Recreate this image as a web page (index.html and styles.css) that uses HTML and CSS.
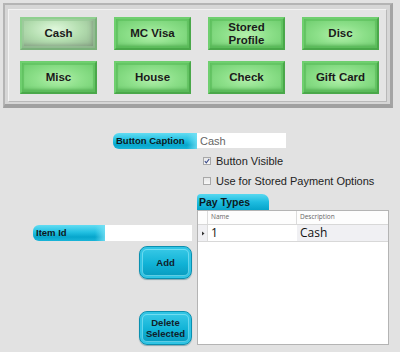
FILE: index.html
```html
<!DOCTYPE html>
<html lang="en">
<head>
    <meta charset="UTF-8">
    <title>Pay Types</title>
    <link rel="stylesheet" href="styles.css">
</head>
<body>
    <div class="panel">
        <div class="inner">
            <button class="tender selected">Cash</button>
            <button class="tender">MC Visa</button>
            <button class="tender">Stored<br>Profile</button>
            <button class="tender">Disc</button>
            <button class="tender">Misc</button>
            <button class="tender">House</button>
            <button class="tender">Check</button>
            <button class="tender">Gift Card</button>
        </div>
    </div>

    <div class="caption-row">
        <div class="label caption-label">Button Caption</div>
        <input class="field caption-field" type="text" value="Cash">
    </div>
    <div class="check-row">
        <span class="box"><svg width="6" height="6" viewBox="0 0 6 6"><path d="M0.8 3.2 L2.3 4.8 L5.2 1" fill="none" stroke="#3a4a8a" stroke-width="1.1"/></svg></span>
        Button Visible
    </div>
    <div class="check-row">
        <span class="box"></span>
        Use for Stored Payment Options
    </div>

    <div class="lower">
        <div class="left">
            <div class="item-row">
                <div class="label item-label">Item Id</div>
                <input class="field item-field" type="text">
            </div>
            <button class="action add">Add</button>
            <button class="action delete">Delete<br>Selected</button>
        </div>
        <div class="right">
            <div class="tab">Pay Types</div>
            <div class="grid">
                <div class="grid-head">
                    <div class="rh"></div>
                    <div class="col name">Name</div>
                    <div class="col desc">Description</div>
                </div>
                <div class="grid-row">
                    <div class="rh"><svg width="4" height="5" viewBox="0 0 4 5"><path d="M1 0.5 L3.5 2.5 L1 4.5 Z" fill="#333"/></svg></div>
                    <div class="col name">1</div>
                    <div class="col desc">Cash</div>
                </div>
            </div>
        </div>
    </div>
</body>
</html>
```

FILE: styles.css
```css
body {
    margin: 0;
    background-color: #e2e2e2;
    font-family: 'Liberation Sans', Arial, sans-serif;
    width: 400px;
    height: 352px;
    overflow: hidden;
}
.panel {
    margin: 3px 0 0 3px;
    width: 390px;
    box-sizing: border-box;
    padding: 4px 3px 2px 3px;
    border: 2px solid #b4b4b4;
    border-bottom: 4px solid #a0a0a0;
    border-right: 3px solid #a4a4a4;
    background-color: #d6d6d6;
}
.inner {
    display: grid;
    grid-template-columns: repeat(4, 77px);
    grid-auto-rows: 33px;
    column-gap: 17px;
    row-gap: 11px;
    padding: 7px 0 7px 11px;
    border: 1px solid;
    border-color: #f2f2f2 #b8b8b8 #b8b8b8 #f2f2f2;
    background-color: #e4e4e4;
}
.tender {
    margin: 0;
    padding: 0;
    border: 2px solid #5cb85c;
    border-color: #6fcf6f #4aa84a #4aa84a #6fcf6f;
    background: radial-gradient(ellipse at 50% 55%, #b4f0ac 0%, #8de08a 45%, #6ccc6c 100%);
    box-shadow: inset 0 0 0 2px rgba(90, 190, 90, 0.6), inset 0 -3px 3px rgba(60, 150, 60, 0.5);
    font-family: 'Liberation Sans', Arial, sans-serif;
    font-weight: bold;
    font-size: 11.5px;
    line-height: 13px;
    color: #1a1a1a;
}
.tender.selected {
    border-color: #8fd08f #7ab07a #7ab07a #8fd08f;
    background: radial-gradient(ellipse at 45% 35%, #e0f8dc 0%, #b4deb0 45%, #8cb08a 100%);
    box-shadow: inset 0 0 0 2px rgba(150, 200, 150, 0.6), inset -3px -3px 4px rgba(110, 120, 110, 0.5);
}
.label {
    height: 16px;
    box-sizing: border-box;
    padding-left: 3px;
    border-radius: 6px 0 0 6px;
    background: linear-gradient(to bottom, #62dcf2 0%, #22c0e2 45%, #06a6cc 75%, #1ab4d8 100%);
    font-weight: bold;
    font-size: 9.5px;
    line-height: 16px;
    color: #0c1a22;
    position: relative;
}
.label::after {
    content: '';
    position: absolute;
    right: 0;
    top: 0;
    bottom: 0;
    width: 10px;
    background: linear-gradient(to right, rgba(120, 220, 240, 0), rgba(120, 225, 245, 0.8));
}
.field {
    margin: 0;
    height: 15px;
    box-sizing: border-box;
    border: none;
    background-color: #fff;
    padding: 0 3px;
    font-family: 'Liberation Sans', Arial, sans-serif;
    font-size: 11px;
    color: #666;
    outline: none;
}
.caption-row {
    display: flex;
    margin: 25px 0 0 113px;
}
.caption-label {
    width: 84px;
}
.caption-field {
    width: 89px;
}
.check-row {
    display: flex;
    align-items: center;
    height: 20px;
    margin-left: 203px;
    font-size: 11px;
    color: #222;
}
.box {
    display: flex;
    align-items: center;
    justify-content: center;
    width: 8px;
    height: 8px;
    box-sizing: border-box;
    margin-right: 5px;
    border: 1px solid #a8a8a8;
    background: linear-gradient(to bottom, #e6e6e6, #f8f8f8);
}
.caption-row + .check-row {
    margin-top: 2px;
}
.lower {
    display: flex;
    margin-top: 3px;
    column-gap: 5px;
}
.left {
    width: 192px;
    display: flex;
    flex-direction: column;
    align-items: flex-end;
}
.item-row {
    display: flex;
    margin-top: 31px;
}
.item-label {
    width: 72px;
}
.item-field {
    width: 87px;
    height: 16px;
}
.action {
    width: 53px;
    padding: 0;
    border: 1px solid #0a90b0;
    border-radius: 8px;
    background: linear-gradient(to bottom, #3ccbe8 0%, #10b2d6 55%, #0898bc 100%);
    box-shadow: inset 0 0 0 2px #30c4e4, inset 0 0 0 3px rgba(150, 235, 250, 0.6), 0 1px 1px rgba(0, 80, 100, 0.4);
    font-family: 'Liberation Sans', Arial, sans-serif;
    font-weight: bold;
    font-size: 9.5px;
    line-height: 11px;
    color: #10202a;
}
.add {
    margin-top: 5px;
    height: 33px;
}
.delete {
    margin-top: 32px;
    height: 34px;
}
.right {
    width: 192px;
}
.tab {
    width: 72px;
    height: 16px;
    box-sizing: border-box;
    padding-left: 2px;
    border-radius: 4px 7px 0 0;
    background: linear-gradient(to bottom, #58d8f0 0%, #1ebce0 50%, #06a4ca 100%);
    font-weight: bold;
    font-size: 10.5px;
    line-height: 17px;
    color: #0c1a22;
}
.grid {
    height: 135px;
    box-sizing: border-box;
    border: 1px solid #b4b4b4;
    background-color: #fff;
}
.grid-head,
.grid-row {
    display: flex;
}
.grid-head {
    height: 13px;
    border-bottom: 1px solid #d8d8d8;
    background-color: #fdfdfd;
    font-family: 'Open Sans', sans-serif;
    font-size: 6.5px;
    line-height: 12px;
    color: #666;
}
.grid-row {
    height: 16px;
    border-bottom: 1px solid #d8d8d8;
    background-color: #f0f0f3;
    font-family: 'Open Sans', sans-serif;
    font-size: 12px;
    line-height: 16px;
    color: #111;
}
.rh {
    width: 9px;
    flex: none;
    display: flex;
    align-items: center;
    justify-content: center;
    border-right: 1px solid #dcdcdc;
}
.col {
    box-sizing: border-box;
    padding-left: 3px;
}
.col.name {
    width: 89px;
    border-right: 1px solid #dcdcdc;
}
.grid-row .col.name {
    background-color: #fff;
    border-right: none;
}
.col.desc {
    flex: 1;
}
```
